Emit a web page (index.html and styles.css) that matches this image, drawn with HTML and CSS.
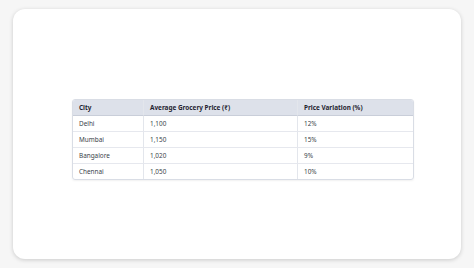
FILE: index.html
```html
<!DOCTYPE html>
<html>
<head>
<meta charset="utf-8">
<link rel="stylesheet" href="styles.css">
</head>
<body>
<div class="card">
  <table class="grid">
    <thead>
      <tr><th class="c1">City</th><th class="c2">Average Grocery Price (₹)</th><th class="c3">Price Variation (%)</th></tr>
    </thead>
    <tbody>
      <tr><td>Delhi</td><td>1,100</td><td>12%</td></tr>
      <tr><td>Mumbai</td><td>1,150</td><td>15%</td></tr>
      <tr><td>Bangalore</td><td>1,020</td><td>9%</td></tr>
      <tr><td>Chennai</td><td>1,050</td><td>10%</td></tr>
    </tbody>
  </table>
</div>
</body>
</html>
```
FILE: styles.css
```css
html, body { margin: 0; padding: 0; }
body {
  width: 474px;
  height: 268px;
  background: #f6f6f6;
  font-family: "Noto Sans", "Open Sans", sans-serif;
  overflow: hidden;
}
.card {
  box-sizing: border-box;
  margin: 9px 13px 0 13px;
  width: 448px;
  height: 250px;
  background: #ffffff;
  border-radius: 12px;
  box-shadow: 0 1px 4px rgba(0,0,0,0.18);
  padding: 90px 47px 0 59px;
}
.grid {
  width: 342px;
  border-collapse: separate;
  border-spacing: 0;
  border: 1px solid #d9dde5;
  border-radius: 3px;
  overflow: hidden;
  font-size: 6.4px;
  box-shadow: 0 1px 2px rgba(0,0,0,0.06);
}
.grid th {
  background: #dde1ea;
  color: #1f2430;
  font-weight: 700;
  text-align: left;
  height: 15px;
  padding: 0 6px;
  border-bottom: 1px solid #c9ced9;
}
.grid td {
  color: #3a3f4a;
  height: 15px;
  padding: 0 6px;
  border-top: 1px solid #e6e8ee;
}
.grid tbody tr:first-child td { border-top: none; }
.grid th + th, .grid td + td { border-left: 1px solid #e3e6ec; }
.c1 { width: 58px; }
.c2 { width: 141px; }
```
